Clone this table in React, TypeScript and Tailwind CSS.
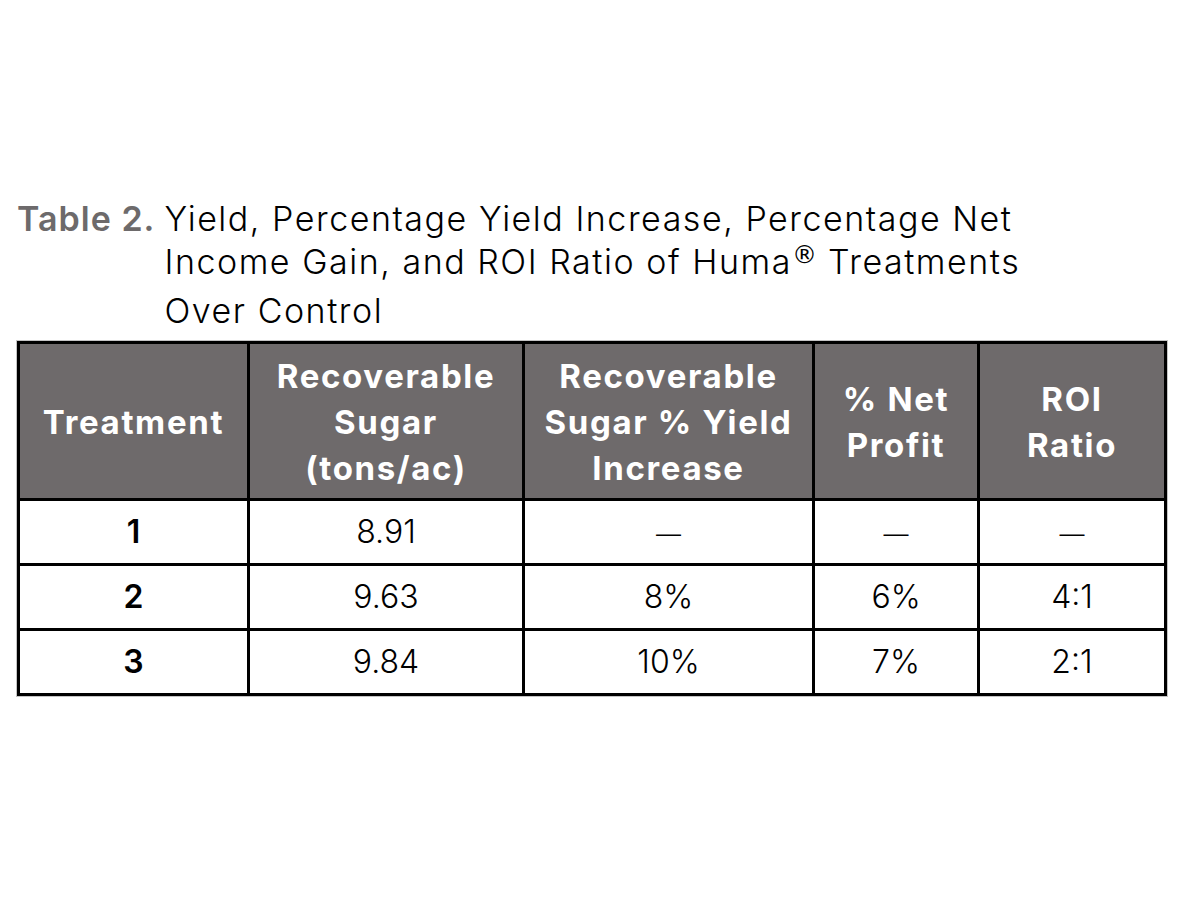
const rows = [
  { t: '1', sugar: '8.91', inc: '—', profit: '—', roi: '—' },
  { t: '2', sugar: '9.63', inc: '8%', profit: '6%', roi: '4:1' },
  { t: '3', sugar: '9.84', inc: '10%', profit: '7%', roi: '2:1' },
];

const font = { fontFamily: '"Inter", "Lato", sans-serif' };

function Cell({ v }: { v: string }) {
  if (v === '—') return <span className="text-[25px]">—</span>;
  return <>{v}</>;
}

export default function App() {
  return (
    <div className="w-[1180px] h-[900px] bg-white pt-[197px] pl-[17px]" style={font}>
      <div className="flex text-[34px] leading-[43px] text-black font-light tracking-[0.045em]">
        <span className="font-semibold text-[#6d6a6b] mr-[9px] tracking-[0.03em]">Table 2.</span>
        <div>
          <div>Yield, Percentage Yield Increase, Percentage Net</div>
          <div>
            Income Gain, and ROI Ratio of Huma
            <span
              className="inline-block text-[25px] leading-none align-[11px] tracking-normal font-normal"
              style={{ fontFamily: '"DejaVu Sans", sans-serif' }}
            >
              ®
            </span>{' '}
            Treatments
          </div>
          <div className="mt-[6px]">Over Control</div>
        </div>
      </div>

      <table className="mt-[9px] w-[1147px] table-fixed border-collapse border-[3px] border-black shadow-[0_0_0_1px_#c4c4c4]">
        <colgroup>
          <col className="w-[230px]" />
          <col className="w-[275px]" />
          <col className="w-[290px]" />
          <col className="w-[165px]" />
          <col className="w-[187px]" />
        </colgroup>
        <thead>
          <tr className="bg-[#6e6a6b] text-white text-[33px] leading-[46px] h-[157px] tracking-[0.05em]">
            <th className="border-[3px] border-black font-bold pt-[2px]">Treatment</th>
            <th className="border-[3px] border-black font-bold pt-[2px]">
              Recoverable
              <br />
              Sugar
              <br />
              (tons/ac)
            </th>
            <th className="border-[3px] border-black font-bold pt-[2px]">
              Recoverable
              <br />
              Sugar % Yield
              <br />
              Increase
            </th>
            <th className="border-[3px] border-black font-bold pt-[2px]">
              % Net
              <br />
              Profit
            </th>
            <th className="border-[3px] border-black font-bold pt-[2px]">
              ROI
              <br />
              Ratio
            </th>
          </tr>
        </thead>
        <tbody>
          {rows.map((r) => (
            <tr key={r.t} className="h-[65px] text-[32px] text-center text-black">
              <td className="border-[3px] border-black font-semibold">{r.t}</td>
              <td className="border-[3px] border-black font-light">{r.sugar}</td>
              <td className="border-[3px] border-black font-light">
                <Cell v={r.inc} />
              </td>
              <td className="border-[3px] border-black font-light">
                <Cell v={r.profit} />
              </td>
              <td className="border-[3px] border-black font-light">
                <Cell v={r.roi} />
              </td>
            </tr>
          ))}
        </tbody>
      </table>
    </div>
  );
}
